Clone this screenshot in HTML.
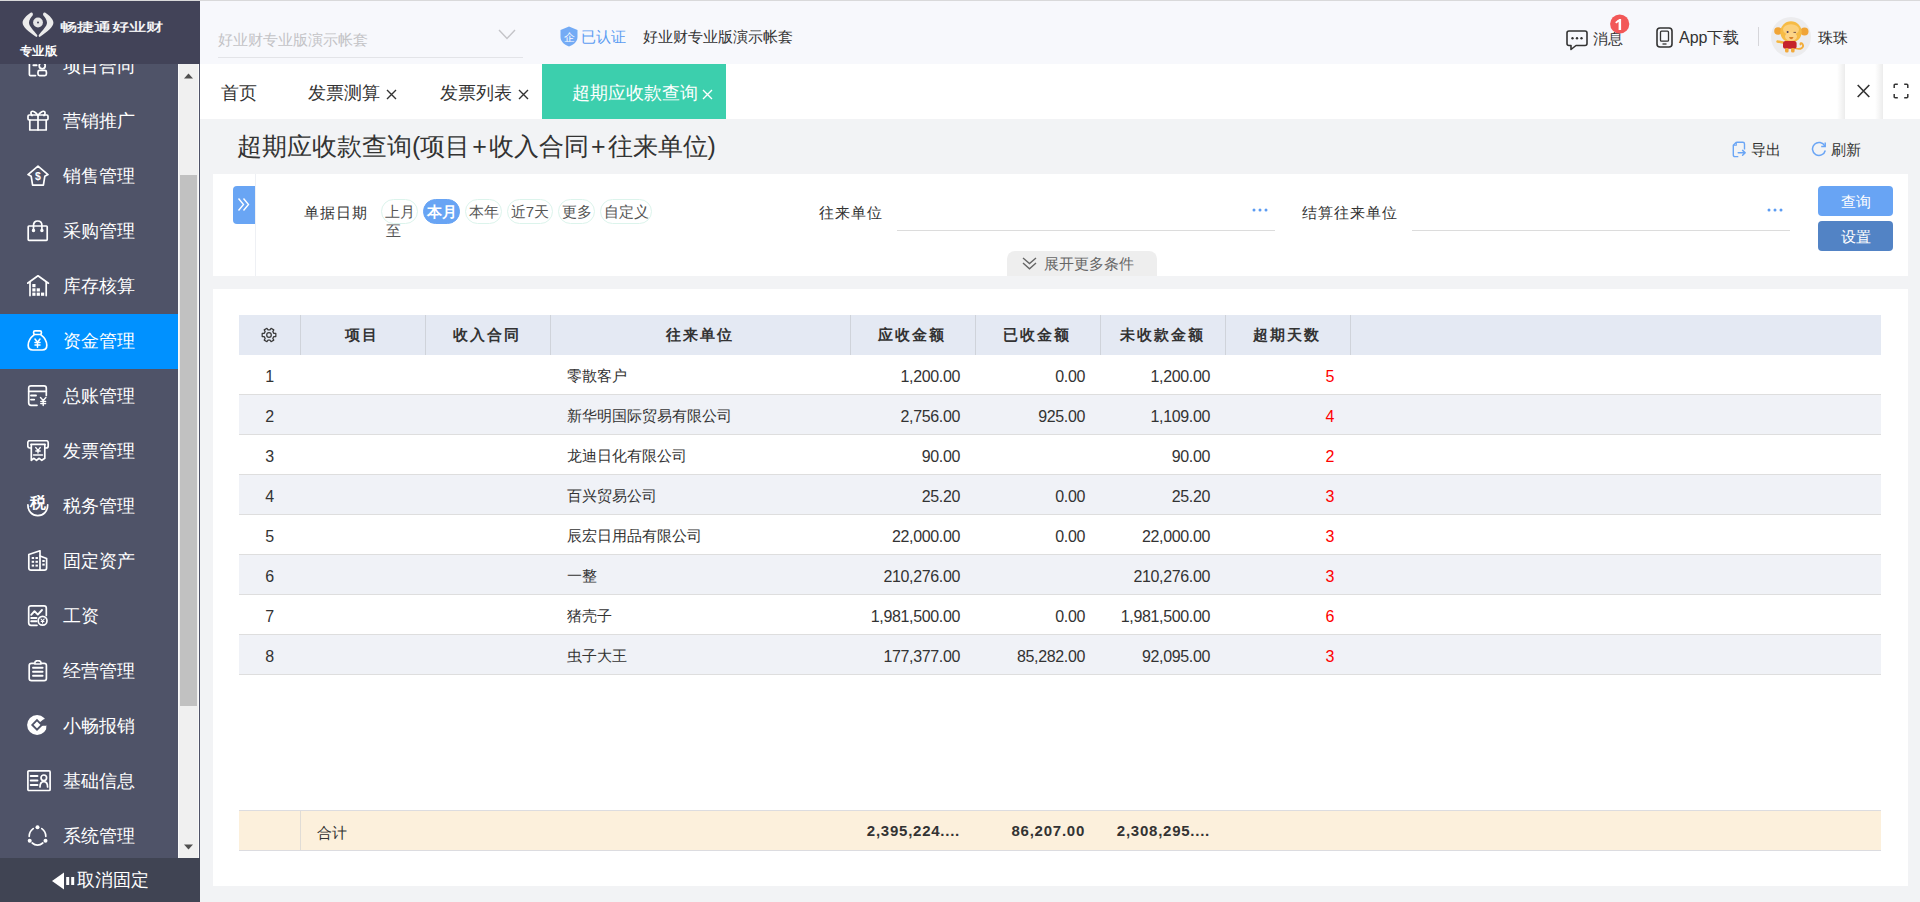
<!DOCTYPE html>
<html><head><meta charset="utf-8">
<style>
*{box-sizing:border-box;margin:0;padding:0}
html,body{width:1920px;height:902px;overflow:hidden;background:#f2f3f5;font-family:"Liberation Sans",sans-serif;color:#333}
.a{position:absolute}
.t{position:absolute;white-space:nowrap;line-height:1}
#topline{left:0;top:0;width:1920px;height:1px;background:#d9d9da;z-index:5}
#side{left:0;top:0;width:200px;height:902px;background:#4f5368;overflow:hidden}
#logo{left:0;top:0;width:200px;height:64px;background:#424358}
.mi{position:absolute;left:0;width:178px;height:55px;color:#fff;font-size:17.5px}
.mi .tx{position:absolute;left:63px;top:19px;line-height:1;white-space:nowrap}
.mi.on{background:#0091ff}
#sb{left:178px;top:64px;width:21px;height:794px;background:#f0f0f0;border-left:1px solid #fafafa;border-right:1px solid #fafafa}
#bottom{left:0;top:858px;width:200px;height:44px;background:#404453}
#hdr{left:200px;top:0;width:1720px;height:64px;background:#f7f8fc}
#tabs{left:200px;top:64px;width:1720px;height:55px;background:#fff}
.tab{position:absolute;top:0;height:55px;font-size:17.5px;color:#333}
.tab .tx{position:absolute;top:20.5px;line-height:1;white-space:nowrap}
.panel{position:absolute;background:#fff}
.pill{position:absolute;top:199px;height:25px;border:1px solid #dcf4ec;border-radius:13px;font-size:15px;color:#555;line-height:23px;text-align:center;white-space:nowrap}
.row{position:absolute;left:239px;width:1642px;height:40px;border-bottom:1px solid #dedede}
.cell{position:absolute;top:0;height:39px;line-height:41px;font-size:15px;color:#333;white-space:nowrap}
.r{text-align:right}
.num{font-size:16px;letter-spacing:-0.35px;margin-top:1px}
.th{position:absolute;top:-0.5px;height:40px;line-height:40px;text-align:center;font-size:15px;font-weight:bold;letter-spacing:2px;color:#333;white-space:nowrap;margin-left:-0.5px}
.lbl{position:absolute;font-size:15px;color:#333;line-height:1;white-space:nowrap}
</style></head><body>
<div id="topline" class="a"></div>

<!-- SIDEBAR -->
<div id="side" class="a">
  <div id="logo" class="a">
    <svg class="a" style="left:22px;top:12px" width="32" height="26" viewBox="0 0 32 26">
      <path d="M9 0.6 C4 4 0.6 7.5 0.6 10.8 C0.6 14.5 6 19.5 14 24.8 C15 25.3 15.6 24.2 15.2 23 C11.5 18.5 7 14 7 10.8 C7 8 9 5.5 10.6 3.5 C11.5 2 10.5 0 9 0.6 Z" fill="#ececec"/>
      <path d="M23 0.6 C28 4 31.4 7.5 31.4 10.8 C31.4 14.5 26 19.5 18 24.8 C17 25.3 16.4 24.2 16.8 23 C20.5 18.5 25 14 25 10.8 C25 8 23 5.5 21.4 3.5 C20.5 2 21.5 0 23 0.6 Z" fill="#ececec"/>
      <circle cx="16" cy="10.5" r="4.9" fill="#e6e6e6"/>
      <circle cx="16" cy="10.5" r="1" fill="#424358"/>
    </svg>
    <div class="t" style="left:60px;top:21px;font-size:14.5px;font-weight:normal;color:#fff;transform:scale(1.145,0.8);-webkit-text-stroke:0.35px #fff;transform-origin:0 0">畅捷通好业财</div>
    <div class="t" style="left:19.5px;top:44.5px;font-size:12px;font-weight:bold;color:#fff;transform:scaleX(1.03);transform-origin:0 0">专业版</div>
  </div>
  <div class="a" style="left:0;top:64px;width:200px;height:794px;overflow:hidden">
    <div class="a" style="left:0;top:-25px;width:178px;height:900px">
<div class="mi" style="top:0px"><svg width="24" height="22" viewBox="0 0 24 22" style="position:absolute;left:27px;top:16px" fill="none" stroke="#fff" stroke-width="1.7" stroke-linecap="round" stroke-linejoin="round"><path d="M8.5 3 H3.5 C2.8 3 2.4 3.4 2.4 4.1 V19.5 C2.4 20.2 2.8 20.6 3.5 20.6 H8.5"/><path d="M6.4 10.3 H9.6" stroke-width="1.9"/><circle cx="15.2" cy="10.8" r="3"/><rect x="11" y="15.3" width="8.4" height="5.3" rx="1.6"/></svg><div class="tx">项目合同</div></div>
<div class="mi" style="top:55px"><svg width="24" height="22" viewBox="0 0 24 22" style="position:absolute;left:27px;top:16px" fill="none" stroke="#fff" stroke-width="1.7" stroke-linecap="round" stroke-linejoin="round"><rect x="1" y="5" width="20" height="5" rx="1.2"/><path d="M2.8 10 V20 H19.2 V10"/><path d="M11 5 V20"/><path d="M11 5.5 C9 2.5 6 0.3 4.5 1.7 C3.2 3 5 5.5 5 5.5"/><path d="M11 5.5 C13 2.5 16 0.3 17.5 1.7 C18.8 3 17 5.5 17 5.5"/></svg><div class="tx">营销推广</div></div>
<div class="mi" style="top:110px"><svg width="24" height="22" viewBox="0 0 24 22" style="position:absolute;left:27px;top:16px" fill="none" stroke="#fff" stroke-width="1.7" stroke-linecap="round" stroke-linejoin="round"><path d="M11 1.2 L21 9.6 L17.8 11.3 L16.4 20.2 H5.6 L4.2 11.3 L1 9.6 Z"/><text x="11" y="14.6" font-size="10.5" font-weight="bold" fill="#fff" stroke="none" text-anchor="middle" font-family="Liberation Sans">$</text></svg><div class="tx">销售管理</div></div>
<div class="mi" style="top:165px"><svg width="24" height="22" viewBox="0 0 24 22" style="position:absolute;left:27px;top:16px" fill="none" stroke="#fff" stroke-width="1.7" stroke-linecap="round" stroke-linejoin="round"><rect x="1.2" y="6" width="19" height="14.4" rx="0.8"/><path d="M6.5 10.2 V5.5 C6.5 2.5 8.3 1 10.7 1 C13.1 1 14.9 2.5 14.9 5.5 V10.2"/><circle cx="6.5" cy="10.4" r="0.9" fill="#fff"/><circle cx="14.9" cy="10.4" r="0.9" fill="#fff"/></svg><div class="tx">采购管理</div></div>
<div class="mi" style="top:220px"><svg width="24" height="22" viewBox="0 0 24 22" style="position:absolute;left:27px;top:16px" fill="none" stroke="#fff" stroke-width="1.7" stroke-linecap="round" stroke-linejoin="round"><path d="M0.6 8.2 L11 0.8 L21.4 8.2"/><path d="M3 7 V20.6"/><path d="M19.2 7 V20.6"/><g fill="#fff" stroke="none"><rect x="5.3" y="9" width="3.2" height="3.2"/><rect x="5.3" y="13.3" width="3.2" height="3.2"/><rect x="9.7" y="13.3" width="3.2" height="3.2"/><rect x="5.3" y="17.6" width="3.2" height="3.2"/><rect x="9.7" y="17.6" width="3.2" height="3.2"/><rect x="14" y="17.6" width="3.2" height="3.2"/></g></svg><div class="tx">库存核算</div></div>
<div class="mi on" style="top:275px"><svg width="24" height="22" viewBox="0 0 24 22" style="position:absolute;left:27px;top:16px" fill="none" stroke="#fff" stroke-width="1.7" stroke-linecap="round" stroke-linejoin="round"><rect x="6.6" y="0.9" width="7.8" height="3.6" rx="1.4"/><path d="M7.3 4.6 C3.5 7.5 1.2 11.5 1.2 15.3 C1.2 18.5 3 20 5.8 20 H15.2 C18 20 19.8 18.5 19.8 15.3 C19.8 11.5 17.5 7.5 13.7 4.6"/><path d="M8 9 L10.5 12.3 L13 9" stroke-width="1.5"/><path d="M10.5 12.3 V17.3 M8 12.6 H13 M8 14.9 H13" stroke-width="1.5"/></svg><div class="tx">资金管理</div></div>
<div class="mi" style="top:330px"><svg width="24" height="22" viewBox="0 0 24 22" style="position:absolute;left:27px;top:16px" fill="none" stroke="#fff" stroke-width="1.7" stroke-linecap="round" stroke-linejoin="round"><path d="M10 20.3 H4 C2.5 20.3 1.7 19.5 1.7 18 V3 C1.7 1.5 2.5 0.9 4 0.9 H17 C18.5 0.9 19.3 1.5 19.3 3 V10.5"/><path d="M1.7 6.3 H19.3"/><path d="M4 10.5 H9 M4 14.6 H7.2" stroke-width="1.9"/><path d="M13.5 12.5 L16.2 15.5 L18.9 12.5 M16.2 15.5 V20.5 M13.8 16.4 H18.6 M13.8 18.5 H18.6" stroke-width="1.4"/></svg><div class="tx">总账管理</div></div>
<div class="mi" style="top:385px"><svg width="24" height="22" viewBox="0 0 24 22" style="position:absolute;left:27px;top:16px" fill="none" stroke="#fff" stroke-width="1.7" stroke-linecap="round" stroke-linejoin="round"><path d="M4 8 H2.8 C1.5 8 0.8 7.2 0.8 6 V2.8 C0.8 1.5 1.5 0.7 2.8 0.7 H19.2 C20.5 0.7 21.2 1.5 21.2 2.8 V6 C21.2 7.2 20.5 8 19.2 8 H18"/><path d="M4 4.3 H18"/><path d="M4.3 4.5 V20.3 L7 18.3 L9.5 20.3 L12.2 18.3 L14.8 20.3 L17.8 18.3 V4.5"/><path d="M8.7 7.5 L11 10.3 L13.3 7.5 M11 10.3 V13 M8.8 11 H13.2" stroke-width="1.3"/><path d="M6.5 15 H15.5" stroke-width="1.4"/></svg><div class="tx">发票管理</div></div>
<div class="mi" style="top:440px"><svg width="24" height="22" viewBox="0 0 24 22" style="position:absolute;left:27px;top:16px" fill="none" stroke="#fff" stroke-width="1.7" stroke-linecap="round" stroke-linejoin="round"><path d="M0.9 9.8 C0.9 16.3 5 20.6 10.8 20.6 C16.6 20.6 20.7 16.3 20.7 9.8"/><text x="10.6" y="13.2" font-size="15.5" font-weight="bold" fill="#fff" stroke="none" text-anchor="middle">税</text></svg><div class="tx">税务管理</div></div>
<div class="mi" style="top:495px"><svg width="24" height="22" viewBox="0 0 24 22" style="position:absolute;left:27px;top:16px" fill="none" stroke="#fff" stroke-width="1.7" stroke-linecap="round" stroke-linejoin="round"><path d="M13 20.2 H4 C2.6 20.2 1.8 19.4 1.8 18 V4.5 L13 0.8 Z"/><path d="M13 6 L19.6 8.5 V18 C19.6 19.4 18.8 20.2 17.4 20.2 H13"/><g fill="#fff" stroke="none"><rect x="4.7" y="7" width="2.4" height="2"/><rect x="8.5" y="7" width="2.4" height="2"/><rect x="4.7" y="10.8" width="2.4" height="2"/><rect x="8.5" y="10.8" width="2.4" height="2"/><rect x="4.7" y="14.6" width="2.4" height="2"/><rect x="8.5" y="14.6" width="2.4" height="2"/><rect x="15.3" y="10" width="2.4" height="2"/><rect x="15.3" y="13.6" width="2.4" height="2"/></g></svg><div class="tx">固定资产</div></div>
<div class="mi" style="top:550px"><svg width="24" height="22" viewBox="0 0 24 22" style="position:absolute;left:27px;top:16px" fill="none" stroke="#fff" stroke-width="1.7" stroke-linecap="round" stroke-linejoin="round"><path d="M10 20.3 H4 C2.5 20.3 1.7 19.5 1.7 18 V3 C1.7 1.5 2.5 0.9 4 0.9 H17 C18.5 0.9 19.3 1.5 19.3 3 V10.5"/><path d="M4.2 9.8 L7.5 6.2 L10.8 9.6 L15 5" stroke-width="1.9"/><path d="M4.2 13 H9.5 M4.2 16.2 H9.5" stroke-width="1.9"/><circle cx="15.6" cy="15.8" r="4.4"/><path d="M14 14 L15.6 15.8 L17.2 14 M15.6 15.8 V18 M14.2 16.5 H17" stroke-width="1.1"/></svg><div class="tx">工资</div></div>
<div class="mi" style="top:605px"><svg width="24" height="22" viewBox="0 0 24 22" style="position:absolute;left:27px;top:16px" fill="none" stroke="#fff" stroke-width="1.7" stroke-linecap="round" stroke-linejoin="round"><path d="M7.5 3.3 H4.5 C3 3.3 2.2 4 2.2 5.5 V18.4 C2.2 19.9 3 20.6 4.5 20.6 H17.2 C18.7 20.6 19.4 19.9 19.4 18.4 V5.5 C19.4 4 18.7 3.3 17.2 3.3 H14.2"/><path d="M7.8 4 H14 V3 C14 1.5 12.7 0.6 10.9 0.6 C9.1 0.6 7.8 1.5 7.8 3 Z" stroke-width="1.6"/><path d="M6 7.7 H15.6 M6 11.7 H15.6 M6 15.8 H15.6" stroke-width="1.9"/></svg><div class="tx">经营管理</div></div>
<div class="mi" style="top:660px"><svg width="24" height="22" viewBox="0 0 24 22" style="position:absolute;left:27px;top:16px" fill="none" stroke="#fff" stroke-width="1.7" stroke-linecap="round" stroke-linejoin="round"><circle cx="10.1" cy="10" r="10" fill="#fff" stroke="none"/><path d="M12.6 7.4 L16.3 4.6 L22 2.5 L22 10.8 L15.2 10.8 Z" fill="#4f5368" stroke="none"/><path d="M10 5.2 L14.7 9.9 L10 14.6 L5.3 9.9 Z" stroke="#4f5368" stroke-width="1.9" stroke-linejoin="miter"/><rect x="19.4" y="10.8" width="3" height="7" fill="#4f5368" stroke="none"/></svg><div class="tx">小畅报销</div></div>
<div class="mi" style="top:715px"><svg width="24" height="22" viewBox="0 0 24 22" style="position:absolute;left:27px;top:16px" fill="none" stroke="#fff" stroke-width="1.7" stroke-linecap="round" stroke-linejoin="round"><rect x="0.9" y="0.9" width="22.2" height="19.6" rx="1"/><path d="M3.7 6 H10.5 M3.7 10.5 H10.5 M3.7 15 H10.5" stroke-width="1.9"/><circle cx="16.8" cy="7.8" r="2.8"/><path d="M13 17 C13 13.5 14.6 11.6 16.8 11.6 C19 11.6 20.6 13.5 20.6 17"/></svg><div class="tx">基础信息</div></div>
<div class="mi" style="top:770px"><svg width="24" height="22" viewBox="0 0 24 22" style="position:absolute;left:27px;top:16px" fill="none" stroke="#fff" stroke-width="1.7" stroke-linecap="round" stroke-linejoin="round"><path d="M6.2 3.6 C3.8 5.3 2.2 8 2.2 11.3"/><path d="M14.8 3.6 C17.2 5.3 18.8 8 18.8 11.3"/><path d="M5.2 18 C6.7 19.3 8.5 20.1 10.5 20.1 C12.5 20.1 14.3 19.3 15.8 18"/><g fill="#fff" stroke="none"><circle cx="10.5" cy="2.3" r="2"/><circle cx="2.7" cy="15.8" r="2"/><circle cx="18.5" cy="15.8" r="2"/></g></svg><div class="tx">系统管理</div></div>

    </div>
  </div>
  <div id="sb" class="a">
    <div class="a" style="left:1px;top:111px;width:17px;height:531px;background:#c1c1c1"></div>
    <svg class="a" style="left:5px;top:9px" width="9" height="6" viewBox="0 0 9 6"><path d="M0 5.5 L4.5 0.5 L9 5.5Z" fill="#505050"/></svg>
    <svg class="a" style="left:5px;top:780px" width="9" height="6" viewBox="0 0 9 6"><path d="M0 0.5 L4.5 5.5 L9 0.5Z" fill="#505050"/></svg>
  </div>
  <div id="bottom" class="a">
    <svg class="a" style="left:52px;top:14px" width="24" height="18" viewBox="0 0 24 18"><path d="M0 9 L12 0.5 L12 17.5Z" fill="#fff"/><rect x="14.2" y="5" width="3" height="8" fill="#fff"/><rect x="19.2" y="5" width="3" height="8" fill="#fff"/></svg>
    <div class="t" style="left:77px;top:14px;font-size:17.5px;color:#fff">取消固定</div>
  </div>
</div>

<!-- HEADER -->
<div id="hdr" class="a">
  <div class="t" style="left:18px;top:32px;font-size:15px;color:#c3c3c6">好业财专业版演示帐套</div>
  <div class="a" style="left:18px;top:57px;width:305px;height:1px;background:#e3e4e8"></div>
  <svg class="a" style="left:298px;top:29px" width="18" height="11" viewBox="0 0 18 11"><path d="M1 1 L9 9.5 L17 1" fill="none" stroke="#c4c4c8" stroke-width="1.4"/></svg>
  <svg class="a" style="left:360px;top:26px" width="18" height="21" viewBox="0 0 18 21"><path d="M9 0.5 L17.5 4 V11 C17.5 15.5 13.5 19 9 20.5 C4.5 19 0.5 15.5 0.5 11 V4 Z" fill="#74abf5"/><text x="9" y="15" font-size="10.5" fill="#fff" text-anchor="middle">企</text></svg>
  <div class="t" style="left:381px;top:29px;font-size:15px;color:#5c9cf2">已认证</div>
  <div class="t" style="left:443px;top:29px;font-size:15px;color:#333">好业财专业版演示帐套</div>

  <svg class="a" style="left:1366px;top:30px" width="22" height="21" viewBox="0 0 22 21"><path d="M3 1 H19 C20.2 1 21 1.8 21 3 V13.5 C21 14.7 20.2 15.5 19 15.5 H10 L5 19.5 V15.5 H3 C1.8 15.5 1 14.7 1 13.5 V3 C1 1.8 1.8 1 3 1 Z" fill="none" stroke="#333" stroke-width="1.6" stroke-linejoin="round"/><circle cx="6.5" cy="8.3" r="1.2" fill="#333"/><circle cx="11" cy="8.3" r="1.2" fill="#333"/><circle cx="15.5" cy="8.3" r="1.2" fill="#333"/></svg>
  <div class="t" style="left:1393px;top:31px;font-size:15px;color:#333">消息</div>
  <svg class="a" style="left:1410px;top:14px" width="20" height="20" viewBox="0 0 20 20"><circle cx="9.7" cy="10" r="9.6" fill="#f25858"/><path d="M8.6 5 H11.1 V16 H8.6 Z M5.2 8.2 L8.8 5 L9.6 7.3 L6.2 9.6 Z" fill="#fff"/></svg>
  <svg class="a" style="left:1456px;top:27px" width="17" height="21" viewBox="0 0 17 21"><rect x="1" y="1" width="15" height="19" rx="3" fill="none" stroke="#333" stroke-width="1.6"/><rect x="4.5" y="4.2" width="8" height="10" rx="1" fill="none" stroke="#333" stroke-width="1.3"/><path d="M6.5 17 H10.5" stroke="#333" stroke-width="1.3"/></svg>
  <div class="t" style="left:1479px;top:30px;font-size:16px;color:#333">App下载</div>
  <div class="a" style="left:1558px;top:27px;width:1px;height:19px;background:#d6d6da"></div>
  <svg class="a" style="left:1571px;top:17px" width="40" height="40" viewBox="0 0 40 40">
    <circle cx="20" cy="20" r="20" fill="#ececee"/>
    <path d="M25 31.5 C30 33 33.5 30 31.5 27 C30.5 25.5 29 26 29.5 27.5" fill="none" stroke="#f3ad3a" stroke-width="1.8" stroke-linecap="round"/>
    <circle cx="7" cy="14" r="3.8" fill="#f0a436"/>
    <circle cx="33.5" cy="14.5" r="4" fill="#f0a436"/>
    <circle cx="20" cy="15" r="10.7" fill="#f6bb45"/>
    <ellipse cx="20" cy="12.5" rx="8" ry="5.3" fill="#fbd07c"/>
    <ellipse cx="20" cy="19.5" rx="6" ry="4.3" fill="#fcd488"/>
    <circle cx="16.6" cy="15" r="1" fill="#4a3a5a"/>
    <path d="M22.5 15.4 H25" stroke="#6a4a4a" stroke-width="0.9"/>
    <path d="M18 20 C19 23 21.5 23 22.5 20 Z" fill="#d9822b"/>
    <path d="M12 25.5 L6.5 24.5" stroke="#f5b63f" stroke-width="2.4" stroke-linecap="round"/>
    <rect x="12" y="24" width="13.6" height="7.8" rx="2.5" fill="#c5222b"/>
    <rect x="14" y="31" width="3.6" height="4.4" rx="1.5" fill="#f2a93b"/>
    <rect x="20" y="31" width="3.6" height="4.4" rx="1.5" fill="#f2a93b"/>
  </svg>
  <div class="t" style="left:1618px;top:30px;font-size:15px;color:#333">珠珠</div>
</div>

<!-- TABS -->
<div id="tabs" class="a">
  <div class="tab" style="left:21px"><div class="tx">首页</div></div>
  <div class="tab" style="left:108px"><div class="tx">发票测算</div></div>
  <svg class="a" style="left:186px;top:25px" width="11" height="11" viewBox="0 0 11 11"><path d="M1 1 L10 10 M10 1 L1 10" stroke="#333" stroke-width="1.4"/></svg>
  <div class="tab" style="left:240px"><div class="tx">发票列表</div></div>
  <svg class="a" style="left:318px;top:25px" width="11" height="11" viewBox="0 0 11 11"><path d="M1 1 L10 10 M10 1 L1 10" stroke="#333" stroke-width="1.4"/></svg>
  <div class="a" style="left:342px;top:0;width:184px;height:55px;background:#3ccfad"></div>
  <div class="tab" style="left:372px;color:#fff"><div class="tx">超期应收款查询</div></div>
  <svg class="a" style="left:502px;top:25px" width="11" height="11" viewBox="0 0 11 11"><path d="M1 1 L10 10 M10 1 L1 10" stroke="#fff" stroke-width="1.4"/></svg>

  <div class="a" style="left:1637px;top:0;width:8px;height:55px;background:linear-gradient(to right,rgba(0,0,0,0),rgba(0,0,0,0.075))"></div>
  <svg class="a" style="left:1657px;top:20px" width="13" height="14" viewBox="0 0 13 14"><path d="M0.7 1 L12.3 13 M12.3 1 L0.7 13" stroke="#333" stroke-width="1.6"/></svg>
  <div class="a" style="left:1675px;top:0;width:8px;height:55px;background:linear-gradient(to right,rgba(0,0,0,0),rgba(0,0,0,0.075))"></div>
  <svg class="a" style="left:1693px;top:19px" width="16" height="16" viewBox="0 0 16 16"><path d="M1.2 5 V2.2 C1.2 1.6 1.6 1.2 2.2 1.2 H4.8 M11.2 1.2 H13.8 C14.4 1.2 14.8 1.6 14.8 2.2 V5 M14.8 11 V13.8 C14.8 14.4 14.4 14.8 13.8 14.8 H11.2 M4.8 14.8 H2.2 C1.6 14.8 1.2 14.4 1.2 13.8 V11" fill="none" stroke="#333" stroke-width="1.5"/></svg>
</div>

<!-- TITLE -->
<div class="t" style="left:237px;top:134px;font-size:25px;color:#333">超期应收款查询(项目<span style="margin:0 2px">+</span>收入合同<span style="margin:0 2px">+</span>往来单位)</div>
<svg class="a" style="left:1732px;top:141px" width="15" height="17" viewBox="0 0 15 17"><path d="M4.3 1.2 H10.8 C11.9 1.2 12.5 1.8 12.5 2.9 V8.6 M6.3 15.6 H3 C1.9 15.6 1.3 15 1.3 13.9 V4.3 L4.3 1.2" fill="none" stroke="#6aa5f5" stroke-width="1.4" stroke-linejoin="round"/><path d="M4.3 1.5 V4.3 H1.5" fill="none" stroke="#6aa5f5" stroke-width="1.1"/><path d="M6.2 11.8 H13 M10.6 9.4 L13.2 11.8 L10.6 14.2" fill="none" stroke="#6aa5f5" stroke-width="1.5" stroke-linecap="round" stroke-linejoin="round"/></svg>
<div class="t" style="left:1751px;top:142px;font-size:15px;color:#333">导出</div>
<svg class="a" style="left:1811px;top:141px" width="16" height="16" viewBox="0 0 16 16"><path d="M13.8 5 A6.5 6.5 0 1 0 14.3 9.5" fill="none" stroke="#6aa5f5" stroke-width="1.5"/><path d="M14.2 1.5 V5.5 H10.2" fill="none" stroke="#6aa5f5" stroke-width="1.5"/></svg>
<div class="t" style="left:1831px;top:142px;font-size:15px;color:#333">刷新</div>

<!-- FILTER PANEL -->
<div class="panel" style="left:213px;top:174px;width:1695px;height:102px"></div>
<div class="a" style="left:255px;top:174px;width:1px;height:102px;background:#eef0f4"></div>
<div class="a" style="left:233px;top:186px;width:22px;height:38px;background:#69a5f4;border-radius:4px 0 0 4px"></div>
<svg class="a" style="left:237px;top:197px" width="15" height="15" viewBox="0 0 15 15"><path d="M1.5 1.5 L6.5 7.5 L1.5 13.5 M6.5 1.5 L11.5 7.5 L6.5 13.5" fill="none" stroke="#fff" stroke-width="1.4"/></svg>
<div class="lbl" style="left:304px;top:205px;letter-spacing:1px">单据日期</div>
<div class="pill" style="left:381px;width:37px">上月</div>
<div class="pill" style="left:423px;width:37px;background:#68a4f4;border-color:#68a4f4;color:#fff;font-weight:bold">本月</div>
<div class="pill" style="left:465px;width:37px">本年</div>
<div class="pill" style="left:507px;width:46px">近7天</div>
<div class="pill" style="left:558px;width:37px">更多</div>
<div class="pill" style="left:600px;width:52px">自定义</div>
<div class="lbl" style="left:386px;top:223px;color:#555">至</div>
<div class="lbl" style="left:819px;top:205px;letter-spacing:1px">往来单位</div>
<div class="a" style="left:897px;top:230px;width:378px;height:1px;background:#dcdcdc"></div>
<svg class="a" style="left:1252px;top:208px" width="16" height="4" viewBox="0 0 16 4"><circle cx="2" cy="2" r="1.5" fill="#5c9cf2"/><circle cx="8" cy="2" r="1.5" fill="#5c9cf2"/><circle cx="14" cy="2" r="1.5" fill="#5c9cf2"/></svg>
<div class="lbl" style="left:1302px;top:205px;letter-spacing:1px">结算往来单位</div>
<div class="a" style="left:1412px;top:230px;width:378px;height:1px;background:#dcdcdc"></div>
<svg class="a" style="left:1767px;top:208px" width="16" height="4" viewBox="0 0 16 4"><circle cx="2" cy="2" r="1.5" fill="#5c9cf2"/><circle cx="8" cy="2" r="1.5" fill="#5c9cf2"/><circle cx="14" cy="2" r="1.5" fill="#5c9cf2"/></svg>
<div class="a" style="left:1818px;top:186px;width:75px;height:30px;background:#68a4f4;border-radius:4px;color:#fff;font-size:15px;text-align:center;line-height:31px">查询</div>
<div class="a" style="left:1818px;top:221px;width:75px;height:30px;background:#5283c5;border-radius:4px;color:#fff;font-size:15px;text-align:center;line-height:31px">设置</div>
<div class="a" style="left:1007px;top:251px;width:150px;height:25px;background:#eeeeee;border-radius:8px 8px 0 0"></div>
<svg class="a" style="left:1022px;top:257px" width="15" height="13" viewBox="0 0 15 13"><path d="M1 1 L7.5 6.5 L14 1 M1 6 L7.5 11.8 L14 6" fill="none" stroke="#666" stroke-width="1.4"/></svg>
<div class="lbl" style="left:1044px;top:256px;color:#666">展开更多条件</div>

<!-- TABLE PANEL -->
<div class="panel" style="left:213px;top:289px;width:1695px;height:597px"></div>
<div class="a" style="left:239px;top:315px;width:1642px;height:40px;background:#e4e9f3">
<div class="th" style="left:61px;width:125px">项目</div><div class="th" style="left:186px;width:125px">收入合同</div><div class="th" style="left:311px;width:300px">往来单位</div><div class="th" style="left:611px;width:125px">应收金额</div><div class="th" style="left:736px;width:125px">已收金额</div><div class="th" style="left:861px;width:125px">未收款金额</div><div class="th" style="left:986px;width:125px">超期天数</div><div class="a" style="left:61px;top:0;width:1px;height:40px;background:#cfd3da"></div><div class="a" style="left:186px;top:0;width:1px;height:40px;background:#cfd3da"></div><div class="a" style="left:311px;top:0;width:1px;height:40px;background:#cfd3da"></div><div class="a" style="left:611px;top:0;width:1px;height:40px;background:#cfd3da"></div><div class="a" style="left:736px;top:0;width:1px;height:40px;background:#cfd3da"></div><div class="a" style="left:861px;top:0;width:1px;height:40px;background:#cfd3da"></div><div class="a" style="left:986px;top:0;width:1px;height:40px;background:#cfd3da"></div><div class="a" style="left:1111px;top:0;width:1px;height:40px;background:#cfd3da"></div>
  <svg class="a" style="left:22px;top:12px" width="16" height="16" viewBox="0 0 16 16"><path d="M14.82 6.43 L14.82 9.57 L12.82 9.66 L11.85 11.35 L12.77 13.12 L10.05 14.69 L8.97 13.01 L7.03 13.01 L5.95 14.69 L3.23 13.12 L4.15 11.35 L3.18 9.66 L1.18 9.57 L1.18 6.43 L3.18 6.34 L4.15 4.65 L3.23 2.88 L5.95 1.31 L7.03 2.99 L8.97 2.99 L10.05 1.31 L12.77 2.88 L11.85 4.65 L12.82 6.34 Z" fill="none" stroke="#3a3a3a" stroke-width="1.25" stroke-linejoin="round"/><circle cx="8" cy="8" r="2.3" fill="none" stroke="#3a3a3a" stroke-width="1.25"/></svg>
</div>
<div class="row" style="top:355px;background:#fff"><div class="cell num" style="left:0;width:61px;text-align:center">1</div><div class="cell" style="left:328px">零散客户</div><div class="cell r num" style="left:611px;width:110px">1,200.00</div><div class="cell r num" style="left:736px;width:110px">0.00</div><div class="cell r num" style="left:861px;width:110px">1,200.00</div><div class="cell r num" style="left:986px;width:109px;color:#f00">5</div></div>
<div class="row" style="top:395px;background:#f0f2f7"><div class="cell num" style="left:0;width:61px;text-align:center">2</div><div class="cell" style="left:328px">新华明国际贸易有限公司</div><div class="cell r num" style="left:611px;width:110px">2,756.00</div><div class="cell r num" style="left:736px;width:110px">925.00</div><div class="cell r num" style="left:861px;width:110px">1,109.00</div><div class="cell r num" style="left:986px;width:109px;color:#f00">4</div></div>
<div class="row" style="top:435px;background:#fff"><div class="cell num" style="left:0;width:61px;text-align:center">3</div><div class="cell" style="left:328px">龙迪日化有限公司</div><div class="cell r num" style="left:611px;width:110px">90.00</div><div class="cell r num" style="left:736px;width:110px"></div><div class="cell r num" style="left:861px;width:110px">90.00</div><div class="cell r num" style="left:986px;width:109px;color:#f00">2</div></div>
<div class="row" style="top:475px;background:#f0f2f7"><div class="cell num" style="left:0;width:61px;text-align:center">4</div><div class="cell" style="left:328px">百兴贸易公司</div><div class="cell r num" style="left:611px;width:110px">25.20</div><div class="cell r num" style="left:736px;width:110px">0.00</div><div class="cell r num" style="left:861px;width:110px">25.20</div><div class="cell r num" style="left:986px;width:109px;color:#f00">3</div></div>
<div class="row" style="top:515px;background:#fff"><div class="cell num" style="left:0;width:61px;text-align:center">5</div><div class="cell" style="left:328px">辰宏日用品有限公司</div><div class="cell r num" style="left:611px;width:110px">22,000.00</div><div class="cell r num" style="left:736px;width:110px">0.00</div><div class="cell r num" style="left:861px;width:110px">22,000.00</div><div class="cell r num" style="left:986px;width:109px;color:#f00">3</div></div>
<div class="row" style="top:555px;background:#f0f2f7"><div class="cell num" style="left:0;width:61px;text-align:center">6</div><div class="cell" style="left:328px">一整</div><div class="cell r num" style="left:611px;width:110px">210,276.00</div><div class="cell r num" style="left:736px;width:110px"></div><div class="cell r num" style="left:861px;width:110px">210,276.00</div><div class="cell r num" style="left:986px;width:109px;color:#f00">3</div></div>
<div class="row" style="top:595px;background:#fff"><div class="cell num" style="left:0;width:61px;text-align:center">7</div><div class="cell" style="left:328px">猪壳子</div><div class="cell r num" style="left:611px;width:110px">1,981,500.00</div><div class="cell r num" style="left:736px;width:110px">0.00</div><div class="cell r num" style="left:861px;width:110px">1,981,500.00</div><div class="cell r num" style="left:986px;width:109px;color:#f00">6</div></div>
<div class="row" style="top:635px;background:#f0f2f7"><div class="cell num" style="left:0;width:61px;text-align:center">8</div><div class="cell" style="left:328px">虫子大王</div><div class="cell r num" style="left:611px;width:110px">177,377.00</div><div class="cell r num" style="left:736px;width:110px">85,282.00</div><div class="cell r num" style="left:861px;width:110px">92,095.00</div><div class="cell r num" style="left:986px;width:109px;color:#f00">3</div></div>

<div class="a" style="left:239px;top:810px;width:1642px;height:41px;background:#fcf0dc;border-top:1px solid #dcdce0;border-bottom:1px solid #dcdce0"></div>
<div class="a" style="left:300px;top:811px;width:1px;height:39px;background:#e0dcd6"></div>
<div class="lbl" style="left:317px;top:825px">合计</div>
<div class="lbl" style="left:850px;top:823px;width:110px;text-align:right;font-weight:bold;letter-spacing:0.75px">2,395,224....</div>
<div class="lbl" style="left:975px;top:823px;width:110px;text-align:right;font-weight:bold;letter-spacing:0.75px">86,207.00</div>
<div class="lbl" style="left:1100px;top:823px;width:110px;text-align:right;font-weight:bold;letter-spacing:0.75px">2,308,295....</div>
</body></html>
